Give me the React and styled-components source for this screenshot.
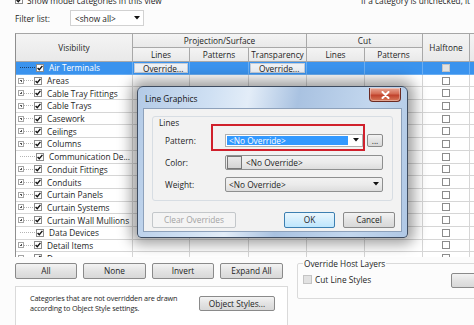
import React from 'react';
import styled, { createGlobalStyle } from 'styled-components';

const COLS = '117px 57px 59px 58px 58px 58px 47px 30px';

const GlobalStyle = createGlobalStyle`
  html, body { margin: 0; padding: 0; background: #fff; }
  body { font-family: "Open Sans", "Noto Sans", sans-serif; }
`;

const Page = styled.div`
  position: relative;
  width: 474px;
  height: 325px;
  overflow: hidden;
  background: #fcfcfc;
  font-size: 8.3px;
  color: #1e1e1e;
`;

const TopRow = styled.div`
  display: flex;
  align-items: center;
  height: 10px;
  margin-top: -5px;
  padding-left: 15px;
  white-space: nowrap;
`;

const Note = styled.span`
  margin-left: auto;
  padding-right: 4px;
`;

const Label = styled.span`
  margin-left: ${p => p.$gap || 0}px;
  color: ${p => (p.$light ? '#fff' : p.$muted ? '#9a9a9a' : 'inherit')};
  white-space: nowrap;
`;

const FilterRow = styled.div`
  display: flex;
  align-items: center;
  height: 16px;
  margin-top: 5px;
  padding-left: 15px;
`;

const FilterSelect = styled.div`
  box-sizing: border-box;
  display: flex;
  align-items: center;
  justify-content: space-between;
  width: 74px;
  height: 16px;
  margin-left: 20px;
  padding: 0 3px 0 4px;
  border: 1px solid #d2d2d2;
  background: #fff;
`;

const Box = styled.span`
  box-sizing: border-box;
  display: inline-flex;
  align-items: center;
  justify-content: center;
  flex: none;
  width: ${p => p.$size || 8}px;
  height: ${p => p.$size || 8}px;
  border: 1px solid ${p => (p.$soft ? '#c4c4c4' : '#8c8c8c')};
  background: ${p => (p.$grey ? '#e2e2e2' : '#fff')};
`;

const Table = styled.div`
  box-sizing: border-box;
  width: 459px;
  height: 224px;
  margin: 7px 0 0 15px;
  border-left: 1px solid #8e8e8e;
  border-top: 1px solid #a6a6a6;
  overflow: hidden;
  background: #fff;
`;

const HeadGrid = styled.div`
  display: grid;
  grid-template-columns: ${COLS};
  grid-template-rows: 14px 14px;
`;

const HeadCell = styled.div`
  box-sizing: border-box;
  grid-column: ${p => p.$col};
  grid-row: ${p => p.$row};
  display: flex;
  align-items: center;
  justify-content: center;
  background: linear-gradient(#f4f4f4, #e9e9e9);
  border-right: 1px solid #a8a8a8;
  border-bottom: 1px solid #a8a8a8;
  white-space: nowrap;
`;

const Row = styled.div`
  display: grid;
  grid-template-columns: ${COLS};
  height: 12.7px;
  background: ${p => (p.$selected ? '#3a93ee' : '#fff')};
`;

const Cell = styled.div`
  box-sizing: border-box;
  display: flex;
  align-items: center;
  justify-content: ${p => (p.$center ? 'center' : 'flex-start')};
  border-right: 1px solid ${p => (p.$selected ? '#6aaef2' : '#d6d6d6')};
  border-bottom: 1px solid ${p => (p.$selected ? '#6aaef2' : '#d6d6d6')};
  overflow: hidden;
  white-space: nowrap;
`;

const Branch = styled.span`
  display: flex;
  align-items: center;
  width: 15px;
  padding-left: ${p => (p.$leaf ? 4 : 2)}px;
  margin-right: 1px;
`;

const Expand = styled.span`
  box-sizing: border-box;
  position: relative;
  flex: none;
  width: 6px;
  height: 6px;
  border: 1px solid #a5a5a5;
  background: #fff;
  &::before,
  &::after {
    content: '';
    position: absolute;
    background: #555;
  }
  &::before { left: 1px; top: 1.5px; width: 2px; height: 1px; }
  &::after { left: 1.5px; top: 1px; width: 1px; height: 2px; }
`;

const Dots = styled.span`
  flex: 1;
  border-top: 1px dotted ${p => (p.$light ? '#1b3f6a' : '#b4b4b4')};
`;

const OverrideBtn = styled.span`
  box-sizing: border-box;
  width: 100%;
  height: 10.5px;
  margin: 0 1px;
  padding-left: 8px;
  line-height: 9px;
  background: #eef1f5;
  border: 1px solid #c4ccd8;
  color: #202020;
`;

const BottomArea = styled.div`
  display: flex;
  margin-top: 6px;
`;

const LeftCol = styled.div`
  width: 273px;
  margin-left: 15px;
`;

const ButtonRow = styled.div`
  display: flex;
  gap: 6px;
`;

const Button = styled.div`
  box-sizing: border-box;
  display: flex;
  align-items: center;
  justify-content: center;
  flex: none;
  width: ${p => p.$w}px;
  height: ${p => p.$h || 15.5}px;
  border: 1px solid ${p => (p.$focus ? '#3c7fb1' : p.$disabled ? '#c3c7ca' : '#8a8a8a')};
  border-radius: 2px;
  background: ${p =>
    p.$focus
      ? 'linear-gradient(#eaf6fd, #bee6fd)'
      : p.$disabled
      ? '#f4f4f4'
      : 'linear-gradient(#f3f3f3, #e3e3e3 50%, #d8d8d8)'};
  color: ${p => (p.$disabled ? '#a3a3a3' : '#1e1e1e')};
  white-space: nowrap;
`;

const CategoriesPanel = styled.div`
  box-sizing: border-box;
  display: flex;
  align-items: flex-start;
  height: 60px;
  margin-top: 7px;
  padding: 5px 12px 0 14px;
  border: 1px solid #dadada;
  background: #fff;
`;

const PanelText = styled.div`
  font-size: 7.3px;
  letter-spacing: -0.15px;
  line-height: 10.3px;
  margin-top: 1px;
  white-space: nowrap;
`;

const PushRight = styled.div`
  margin-left: auto;
  margin-top: 4px;
`;

const HostGroup = styled.fieldset`
  box-sizing: border-box;
  flex: 1;
  height: 40px;
  margin: -4px -6px 0 9px;
  padding: 0 0 0 5px;
  border: 1px solid #dadada;
  border-radius: 2px;
  display: flex;
  align-items: flex-start;
`;

const Legend = styled.legend`
  padding: 0 1px;
  margin-left: 0;
  line-height: 9px;
  white-space: nowrap;
`;

const HostRow = styled.div`
  display: flex;
  align-items: center;
  width: 100%;
  margin-top: 2px;
`;

const EdgeButton = styled(Button)`
  margin-left: auto;
  margin-top: 3px;
  border-radius: 2px 0 0 2px;
`;

/* ---- dialog ---- */

const Dialog = styled.div`
  position: absolute;
  left: 137px;
  top: 86px;
  box-sizing: border-box;
  width: 271px;
  height: 152px;
  display: flex;
  flex-direction: column;
  padding: 0 5px 5px 5px;
  border: 1px solid #3f4d61;
  border-radius: 6px 6px 4px 4px;
  background: linear-gradient(
    100deg,
    #b3cae6 0%,
    #cfe0f3 25%,
    #e3edf8 38%,
    #a9c2e1 55%,
    #c3d7ee 80%,
    #b0c8e5 100%
  );
  box-shadow: 0 0 14px 6px rgba(0, 0, 0, 0.38);
`;

const TitleBar = styled.div`
  display: flex;
  align-items: flex-start;
  justify-content: space-between;
  height: 21px;
`;

const Title = styled.span`
  padding: 6px 0 0 2px;
  color: #101010;
`;

const CloseBtn = styled.span`
  display: flex;
  align-items: center;
  justify-content: center;
  width: 30px;
  height: 13px;
  margin-top: 1px;
  margin-right: 1px;
  border: 1px solid #6b2a22;
  border-top: none;
  border-radius: 0 0 4px 4px;
  background: linear-gradient(#e9a795, #d46a52 45%, #c0422c 55%, #d8795a);
  box-shadow: inset 0 0 0 1px rgba(255, 255, 255, 0.35);
`;

const Client = styled.div`
  flex: 1;
  display: flex;
  flex-direction: column;
  border: 1px solid #8da1bb;
  background: #f2f2f2;
`;

const GroupBox = styled.div`
  box-sizing: border-box;
  height: 85px;
  margin: 7px 8px 0 8px;
  padding: 0 0 0 6px;
  border: 1px solid #d7dde3;
  border-radius: 3px;
`;

const FieldGrid = styled.div`
  display: grid;
  grid-template-columns: 60px 158px;
  grid-auto-rows: 22px;
  align-items: center;
  margin: 1px 0 0 6px;
`;

const Control = styled.div`
  position: relative;
  display: flex;
  align-items: center;
  gap: 4px;
`;

const DropBox = styled.div`
  box-sizing: border-box;
  display: flex;
  align-items: center;
  flex: 1;
  height: ${p => p.$h || 15}px;
  padding: 1px 3px 1px 1px;
  border: 1px solid ${p => (p.$flat ? '#b0b0b0' : '#8e8f8f')};
  border-radius: ${p => (p.$flat ? 0 : 2)}px;
  background: ${p => (p.$flat ? '#fff' : 'linear-gradient(#f2f2f2, #ebebeb 50%, #dddddd)')};
`;

const Highlight = styled.span`
  flex: 1;
  align-self: stretch;
  display: flex;
  align-items: center;
  padding-left: 2px;
  background: #3399ff;
  color: #fff;
  margin-right: 5px;
`;

const ArrowSlot = styled.span`
  display: flex;
  margin-left: auto;
`;

const Swatch = styled.span`
  box-sizing: border-box;
  width: 15px;
  height: 13px;
  margin-right: 4px;
  border: 1px solid #777;
  background: linear-gradient(#e9e9e9, #d4d4d4);
`;

const Plain = styled.span`
  padding-left: 2px;
`;

const Spacer = styled.span`
  flex: 1;
`;

const RedMark = styled.span`
  position: absolute;
  left: -14px;
  top: -10px;
  right: 18px;
  bottom: -4px;
  border: 2px solid #d0202c;
  pointer-events: none;
`;

const Footer = styled.div`
  display: flex;
  gap: 8px;
  margin: 11px 6px 0 8px;
`;

const Tick = () => (
  <svg width="6" height="6" viewBox="0 0 6 6">
    <path d="M0.6 3 L2.3 4.8 L5.4 0.9" fill="none" stroke="#111" strokeWidth="1.4" />
  </svg>
);

const Arrow = () => (
  <svg width="6" height="4" viewBox="0 0 6 4">
    <path d="M0 0 H6 L3 3.5 Z" fill="#111" />
  </svg>
);

const X = () => (
  <svg width="9" height="8" viewBox="0 0 9 8">
    <path d="M1.5 1 L7.5 7 M7.5 1 L1.5 7" stroke="#fff" strokeWidth="2" strokeLinecap="round" />
  </svg>
);

const categories = [
  { name: 'Air Terminals', leaf: true, selected: true },
  { name: 'Areas' },
  { name: 'Cable Tray Fittings' },
  { name: 'Cable Trays' },
  { name: 'Casework' },
  { name: 'Ceilings' },
  { name: 'Columns' },
  { name: 'Communication De...', leaf: true },
  { name: 'Conduit Fittings' },
  { name: 'Conduits' },
  { name: 'Curtain Panels' },
  { name: 'Curtain Systems' },
  { name: 'Curtain Wall Mullions' },
  { name: 'Data Devices', leaf: true },
  { name: 'Detail Items' },
  { name: 'Doors' },
];

const CategoryRow = ({ item }) => {
  const sel = item.selected;
  return (
    <Row $selected={sel}>
      <Cell $selected={sel}>
        <Branch $leaf={item.leaf}>
          {!item.leaf && <Expand />}
          <Dots $light={sel} />
        </Branch>
        <Box><Tick /></Box>
        <Label $gap={5} $light={sel}>{item.name}</Label>
      </Cell>
      <Cell $selected={sel}>{sel && <OverrideBtn>Override...</OverrideBtn>}</Cell>
      <Cell $selected={sel} />
      <Cell $selected={sel}>{sel && <OverrideBtn>Override...</OverrideBtn>}</Cell>
      <Cell $selected={sel} />
      <Cell $selected={sel} />
      <Cell $selected={sel} $center>
        <Box $grey={sel} $soft={sel} />
      </Cell>
      <Cell $selected={sel} />
    </Row>
  );
};

const App = () => (
  <Page>
    <GlobalStyle />
    <TopRow>
      <Box><Tick /></Box>
      <Label $gap={4}>Show model categories in this view</Label>
      <Note>If a category is unchecked, it</Note>
    </TopRow>

    <FilterRow>
      <Label>Filter list:</Label>
      <FilterSelect>
        <span>&lt;show all&gt;</span>
        <Arrow />
      </FilterSelect>
    </FilterRow>

    <Table>
      <HeadGrid>
        <HeadCell $col="1" $row="1 / 3">Visibility</HeadCell>
        <HeadCell $col="2 / 5" $row="1">Projection/Surface</HeadCell>
        <HeadCell $col="2" $row="2">Lines</HeadCell>
        <HeadCell $col="3" $row="2">Patterns</HeadCell>
        <HeadCell $col="4" $row="2">Transparency</HeadCell>
        <HeadCell $col="5 / 7" $row="1">Cut</HeadCell>
        <HeadCell $col="5" $row="2">Lines</HeadCell>
        <HeadCell $col="6" $row="2">Patterns</HeadCell>
        <HeadCell $col="7" $row="1 / 3">Halftone</HeadCell>
        <HeadCell $col="8" $row="1 / 3" />
      </HeadGrid>
      {categories.map(c => (
        <CategoryRow key={c.name} item={c} />
      ))}
    </Table>

    <BottomArea>
      <LeftCol>
        <ButtonRow>
          <Button $w={62}>All</Button>
          <Button $w={63}>None</Button>
          <Button $w={62}>Invert</Button>
          <Button $w={63}>Expand All</Button>
        </ButtonRow>
        <CategoriesPanel>
          <PanelText>
            Categories that are not overridden are drawn
            <br />
            according to Object Style settings.
          </PanelText>
          <PushRight>
            <Button $w={76} $h={15}>Object Styles...</Button>
          </PushRight>
        </CategoriesPanel>
      </LeftCol>
      <HostGroup>
        <Legend>Override Host Layers</Legend>
        <HostRow>
          <Box $size={9} $grey $soft />
          <Label $gap={3}>Cut Line Styles</Label>
          <EdgeButton $w={28} $h={15} />
        </HostRow>
      </HostGroup>
    </BottomArea>

    <Dialog>
      <TitleBar>
        <Title>Line Graphics</Title>
        <CloseBtn><X /></CloseBtn>
      </TitleBar>
      <Client>
        <GroupBox>
          <span>Lines</span>
          <FieldGrid>
            <span>Pattern:</span>
            <Control>
              <DropBox $flat $h={13}>
                <Highlight>&lt;No Override&gt;</Highlight>
                <ArrowSlot><Arrow /></ArrowSlot>
              </DropBox>
              <Button $w={16} $h={13}>...</Button>
              <RedMark />
            </Control>
            <span>Color:</span>
            <Control>
              <DropBox>
                <Swatch />
                <span>&lt;No Override&gt;</span>
              </DropBox>
            </Control>
            <span>Weight:</span>
            <Control>
              <DropBox>
                <Plain>&lt;No Override&gt;</Plain>
                <ArrowSlot><Arrow /></ArrowSlot>
              </DropBox>
            </Control>
          </FieldGrid>
        </GroupBox>
        <Footer>
          <Button $w={84} $disabled>Clear Overrides</Button>
          <Spacer />
          <Button $w={51} $focus>OK</Button>
          <Button $w={52}>Cancel</Button>
        </Footer>
      </Client>
    </Dialog>
  </Page>
);

export default App;
